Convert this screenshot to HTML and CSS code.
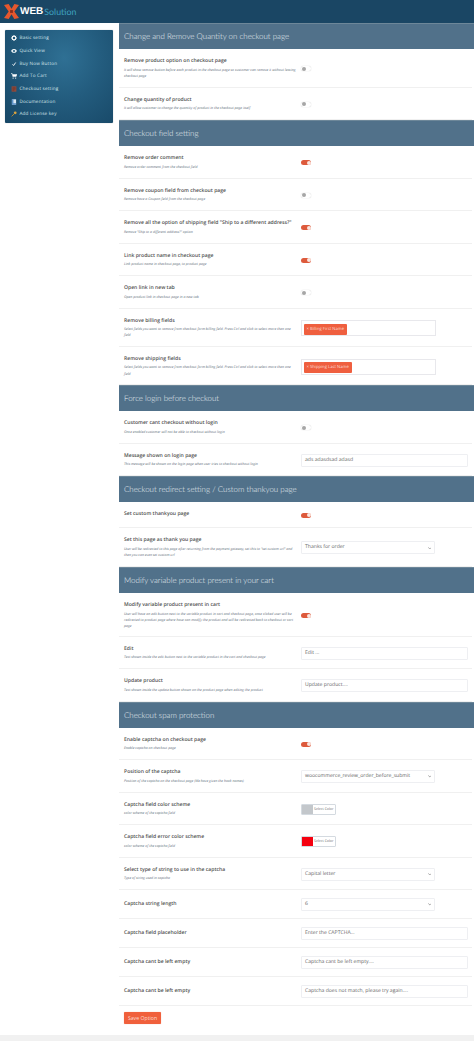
FILE: index.html
```html
<!DOCTYPE html>
<html lang="en">
<head>
<meta charset="utf-8">
<title>WEBSolution checkout settings</title>
<link rel="stylesheet" href="styles.css">
</head>
<body>
<header class="topbar">
  <svg class="logo-mark" viewBox="0 0 16 16"><path d="M0 1 L5 0 L8 5 L11 0 L16 1 L11 8 L16 15 L11 16 L8 11 L5 16 L0 15 L5 8 Z" fill="#e4572e"/><path d="M6.5 6.5h3v3h-3z" fill="#8a2d1c"/></svg>
  <span class="logo-web">WEB</span><span class="logo-sol">Solution</span>
</header>
<div class="layout">
  <aside class="sidebar-col">
    <nav class="sidebar">
      <a class="nav-item"><svg viewBox="0 0 10 10"><circle cx="5" cy="5" r="3.1" fill="none" stroke="#fff" stroke-width="2"/><path d="M5 0v2M5 8v2M0 5h2M8 5h2M1.5 1.5l1.4 1.4M7.1 7.1l1.4 1.4M8.5 1.5L7.1 2.9M2.9 7.1L1.5 8.5" stroke="#fff" stroke-width="1.2"/></svg>Basic setting</a>
      <a class="nav-item"><svg viewBox="0 0 10 10"><path d="M0 5C2 2 3.500 1.800 5 1.800S8 2 10 5C8 8 6.500 8.200 5 8.200S2 8 0 5Z" fill="#e8f0f4"/><circle cx="5" cy="5" r="1.700" fill="#1f5a7c"/></svg>Quick View</a>
      <a class="nav-item"><svg viewBox="0 0 10 10"><path d="M2.500 5.500L4.300 7.500L7.800 2.500" fill="none" stroke="#fff" stroke-width="1.500"/></svg>Buy Now Button</a>
      <a class="nav-item"><svg viewBox="0 0 10 10"><path d="M0 1h2l1 5h5.500L10 2.500H2.500" fill="#fff" stroke="#fff" stroke-width=".8"/><circle cx="3.500" cy="8.500" r="1" fill="#fff"/><circle cx="7.800" cy="8.500" r="1" fill="#fff"/></svg>Add To Cart</a>
      <a class="nav-item"><svg viewBox="0 0 10 10"><rect x="1" y=".5" width="8" height="9" fill="#8f4a3c"/><path d="M2.500 3h5M2.500 5h5M2.500 7h3" stroke="#5d2b24" stroke-width=".8"/></svg>Checkout setting</a>
      <a class="nav-item"><svg viewBox="0 0 10 10"><path d="M1.500 .5H8.500V9.500H1.500Z" fill="#dbe9f5"/><path d="M1.500 .5H4V7H8.500V9.500H1.500Z" fill="#5d93c9"/></svg>Documentation</a>
      <a class="nav-item"><svg viewBox="0 0 10 10"><circle cx="7" cy="3" r="2.300" fill="#d9a441"/><path d="M5.500 4.500L1 9" stroke="#c98f2e" stroke-width="1.400"/></svg>Add License key</a>
    </nav>
  </aside>
  <main class="content">
    <h2 class="section-title">Change and Remove Quantity on checkout page</h2>
    <div class="row">
      <div class="info"><div class="label">Remove product option on checkout page</div><div class="desc">It will show remove button before each product in the checkout page so customer can remove it without leaving checkout page</div></div>
      <div class="control"><span class="toggle"></span></div>
    </div>
    <div class="row">
      <div class="info"><div class="label">Change quantity of product</div><div class="desc">It will allow customer to change the quantity of product in the checkout page itself</div></div>
      <div class="control"><span class="toggle"></span></div>
    </div>

    <h2 class="section-title">Checkout field setting</h2>
    <div class="row">
      <div class="info"><div class="label">Remove order comment</div><div class="desc">Remove order comment from the checkout field</div></div>
      <div class="control"><span class="toggle on"></span></div>
    </div>
    <div class="row">
      <div class="info"><div class="label">Remove coupon field from checkout page</div><div class="desc">Remove have a Coupon field from the checkout page</div></div>
      <div class="control"><span class="toggle"></span></div>
    </div>
    <div class="row">
      <div class="info"><div class="label">Remove all the option of shipping field "Ship to a different address?"</div><div class="desc">Remove "Ship to a different address?" option</div></div>
      <div class="control"><span class="toggle on"></span></div>
    </div>
    <div class="row">
      <div class="info"><div class="label">Link product name in checkout page</div><div class="desc">Link product name in checkout page, to product page</div></div>
      <div class="control"><span class="toggle on"></span></div>
    </div>
    <div class="row">
      <div class="info"><div class="label">Open link in new tab</div><div class="desc">Open product link in checkout page in a new tab</div></div>
      <div class="control"><span class="toggle"></span></div>
    </div>
    <div class="row multi-row">
      <div class="info"><div class="label">Remove billing fields</div><div class="desc">Select fields you want to remove from checkout form billing field. Press Ctrl and click to select more then one field</div></div>
      <div class="control"><div class="multi"><span class="tag">× Billing First Name</span></div></div>
    </div>
    <div class="row multi-row">
      <div class="info"><div class="label">Remove shipping fields</div><div class="desc">Select fields you want to remove from checkout form billing field. Press Ctrl and click to select more then one field</div></div>
      <div class="control"><div class="multi"><span class="tag">× Shipping Last Name</span></div></div>
    </div>

    <h2 class="section-title">Force login before checkout</h2>
    <div class="row">
      <div class="info"><div class="label">Customer cant checkout without login</div><div class="desc">Once enabled customer will not be able to checkout without login</div></div>
      <div class="control"><span class="toggle"></span></div>
    </div>
    <div class="row">
      <div class="info"><div class="label">Message shown on login page</div><div class="desc">This message will be shown on the login page when user tries to checkout without login</div></div>
      <div class="control"><div class="input">ads adasdsad adasd</div></div>
    </div>

    <h2 class="section-title">Checkout redirect setting / Custom thankyou page</h2>
    <div class="row plain">
      <div class="info"><div class="label">Set custom thankyou page</div></div>
      <div class="control"><span class="toggle on"></span></div>
    </div>
    <div class="row">
      <div class="info"><div class="label">Set this page as thank you page</div><div class="desc">User will be redirected to this page after returning from the payment gateway, set this to "set custom url" and then you can even set custom url</div></div>
      <div class="control"><div class="select"><span>Thanks for order</span><svg viewBox="0 0 10 6"><path d="M1 1l4 4 4-4" fill="none" stroke="#555" stroke-width="1.600"/></svg></div></div>
    </div>

    <h2 class="section-title">Modify variable product present in your cart</h2>
    <div class="row tight">
      <div class="info"><div class="label">Modify variable product present in cart</div><div class="desc">User will have an edit button next to the variable product in cart and checkout page, once clicked user will be redirected to product page where have can modify the product and will be redirected back to checkout or cart page</div></div>
      <div class="control"><span class="toggle on"></span></div>
    </div>
    <div class="row">
      <div class="info"><div class="label">Edit</div><div class="desc">Text shown inside the edit button next to the variable product in the cart and checkout page</div></div>
      <div class="control"><div class="input">Edit ...</div></div>
    </div>
    <div class="row">
      <div class="info"><div class="label">Update product</div><div class="desc">Text shown inside the update button shown on the product page when editing the product</div></div>
      <div class="control"><div class="input">Update product....</div></div>
    </div>

    <h2 class="section-title">Checkout spam protection</h2>
    <div class="row">
      <div class="info"><div class="label">Enable captcha on checkout page</div><div class="desc">Enable captcha on checkout page</div></div>
      <div class="control"><span class="toggle on"></span></div>
    </div>
    <div class="row">
      <div class="info"><div class="label">Position of the captcha</div><div class="desc">Position of the captcha on the checkout page (We have given the hook names)</div></div>
      <div class="control"><div class="select"><span>woocommerce_review_order_before_submit</span><svg viewBox="0 0 10 6"><path d="M1 1l4 4 4-4" fill="none" stroke="#555" stroke-width="1.600"/></svg></div></div>
    </div>
    <div class="row">
      <div class="info"><div class="label">Captcha field color scheme</div><div class="desc">color scheme of the captcha field</div></div>
      <div class="control"><div class="color"><span class="swatch grey"></span><span class="color-text">Select Color</span></div></div>
    </div>
    <div class="row">
      <div class="info"><div class="label">Captcha field error color scheme</div><div class="desc">color scheme of the captcha field</div></div>
      <div class="control"><div class="color"><span class="swatch red"></span><span class="color-text">Select Color</span></div></div>
    </div>
    <div class="row">
      <div class="info"><div class="label">Select type of string to use in the captcha</div><div class="desc">Type of string used in captcha</div></div>
      <div class="control"><div class="select"><span>Capital letter</span><svg viewBox="0 0 10 6"><path d="M1 1l4 4 4-4" fill="none" stroke="#555" stroke-width="1.600"/></svg></div></div>
    </div>
    <div class="row compact">
      <div class="info"><div class="label">Captcha string length</div></div>
      <div class="control"><div class="select"><span>6</span><svg viewBox="0 0 10 6"><path d="M1 1l4 4 4-4" fill="none" stroke="#555" stroke-width="1.600"/></svg></div></div>
    </div>
    <div class="row compact">
      <div class="info"><div class="label">Captcha field placeholder</div></div>
      <div class="control"><div class="input">Enter the CAPTCHA...</div></div>
    </div>
    <div class="row compact">
      <div class="info"><div class="label">Captcha cant be left empty</div></div>
      <div class="control"><div class="input">Captcha cant be left empty....</div></div>
    </div>
    <div class="row compact">
      <div class="info"><div class="label">Captcha cant be left empty</div></div>
      <div class="control"><div class="input">Captcha does not match, please try again....</div></div>
    </div>
    <div class="actions"><button class="save" type="button">Save Option</button></div>
  </main>
</div>
<footer class="footer"></footer>
</body>
</html>
```

FILE: styles.css
```css
* { box-sizing: border-box; }
html, body { margin: 0; padding: 0; }
body {
  background: #fff;
  font-family: "Open Sans", "Liberation Sans", sans-serif;
  color: #444;
  height: 1041px;
  overflow: hidden;
  text-rendering: geometricPrecision;
}
.topbar {
  height: 23px;
  background: #1a4664;
  display: flex;
  align-items: center;
  padding-left: 4px;
  font-weight: 700;
}
.logo-mark { width: 15px; height: 15px; margin-right: 1px; flex: none; }
.logo-web { color: #fff; font-family: "Liberation Sans", sans-serif; font-size: 10px; margin-right: 1px; }
.logo-sol { color: #3fa2c0; font-family: "Lato", sans-serif; font-size: 8.800px; font-weight: 400; }
.layout { display: flex; align-items: flex-start; }
.sidebar-col { width: 119px; flex: none; padding: 7px 6px 0 5px; }
.sidebar {
  height: 93px;
  background: radial-gradient(ellipse at 55% 30%, #2f7094 0%, #235c7e 45%, #174766 100%);
  border-radius: 1px;
  box-shadow: 0 0 1px rgba(0, 0, 0, .4);
  padding: 2px 0 0 6px;
  display: flex;
  flex-direction: column;
}
.nav-item {
  height: 12.670px;
  display: flex;
  align-items: center;
  gap: 2.500px;
  font-size: 4.600px;
  letter-spacing: .2px;
  color: #d8e6ec;
}
.nav-item svg { width: 6px; height: 6px; flex: none; }
.content { flex: 1; min-width: 0; }
.section-title {
  margin: 0;
  height: 26px;
  background: #51718a;
  border-top: 1px solid #6d8799;
  color: #e8eff3;
  font-family: "Lato", "Open Sans", sans-serif;
  font-size: 7.950px;
  font-weight: 300;
  line-height: 25px;
  padding-left: 5px;
}
.row {
  display: flex;
  align-items: stretch;
  margin-right: 2px;
  padding: 8px 0 6.700px 5px;
  border-bottom: 1px solid #f0f0f0;
}
.row.multi-row { padding-bottom: 6.200px; }
.row.plain { min-height: 26px; }
.row.tight { padding-bottom: 5.500px; }
.row.compact { padding-top: 7.500px; padding-bottom: 7.500px; }
.row.compact .info { padding-top: 2.500px; }
.info { width: 172px; flex: none; }
.label {
  font-size: 5.100px;
  font-weight: 600;
  line-height: 8px;
  color: #505050;
  white-space: nowrap;
}
.desc {
  margin-top: 2.500px;
  font-size: 3.500px;
  font-style: italic;
  line-height: 6.300px;
  color: #5b6b78;
}
.control {
  flex: 1;
  display: flex;
  align-items: center;
  padding-left: 5px;
}
.toggle {
  position: relative;
  display: block;
  width: 10px;
  height: 5px;
  border-radius: 3px;
  background: #fff;
  box-shadow: 0 0 1px rgba(0, 0, 0, .25);
}
.toggle::after {
  content: "";
  position: absolute;
  left: .5px;
  top: .5px;
  width: 4px;
  height: 4px;
  border-radius: 50%;
  background: #a6a6a6;
}
.toggle.on { background: #dd5a3c; box-shadow: none; }
.toggle.on::after { left: auto; right: .5px; background: #fbe6df; }
.input, .select {
  height: 13px;
  border: 1px solid #eeeff2;
  border-radius: 1px;
  background: #fff;
  font-size: 5.100px;
  line-height: 11px;
  padding-left: 3px;
  color: #666;
  white-space: nowrap;
}
.input { width: 167px; }
.select {
  width: 134px;
  display: flex;
  align-items: center;
  justify-content: space-between;
  padding-right: 3px;
}
.select svg { width: 3.500px; height: 2.500px; flex: none; }
.multi {
  width: 135px;
  height: 16px;
  border: 1px solid #e8e8ec;
  background: #fff;
  padding: 2.500px 0 0 1.500px;
  display: flex;
  align-items: flex-start;
}
.tag {
  height: 11px;
  padding: 0 3px;
  background: #ef5f3f;
  color: #fbdcd2;
  border-radius: 1px;
  font-size: 4.200px;
  line-height: 11px;
  white-space: nowrap;
}
.color {
  width: 34.500px;
  height: 11px;
  display: flex;
  border: 1px solid #d4dae0;
  border-radius: 1px;
  overflow: hidden;
}
.swatch { width: 11px; flex: none; }
.swatch.grey { background: #c3c7cb; }
.swatch.red { background: #f5000f; }
.color-text {
  flex: 1;
  text-align: center;
  font-size: 3.500px;
  line-height: 9px;
  color: #666;
  white-space: nowrap;
}
.actions { padding: 6px 0 11px 5px; }
.save {
  display: block;
  width: 37px;
  height: 12px;
  border: 0;
  border-radius: 1px;
  background: #f0603c;
  color: #fbdcd2;
  font-family: "Open Sans", sans-serif;
  font-size: 5.200px;
  line-height: 12px;
  padding: 0;
  box-shadow: 0 0 1px rgba(240, 96, 60, .6);
}
.footer { height: 6px; background: #f1f1f1; }
```
